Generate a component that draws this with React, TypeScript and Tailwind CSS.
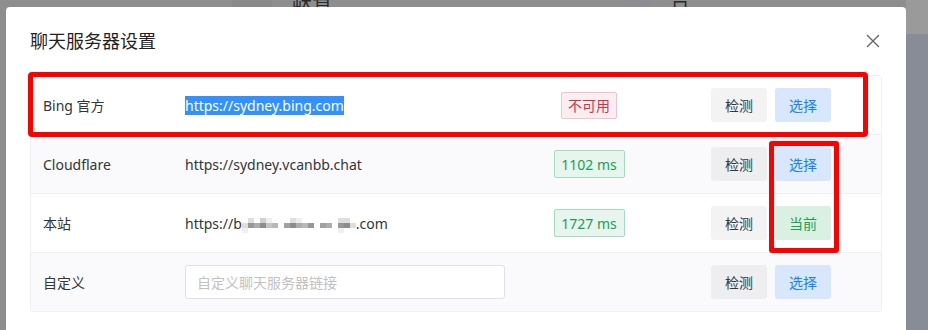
import React from "react";

const font = { fontFamily: '"Noto Sans", "Noto Sans CJK SC", sans-serif' };

function Row({
  name,
  url,
  status,
  action,
  bg,
  first,
}: {
  name: string;
  url: React.ReactNode;
  status: React.ReactNode;
  action: "select" | "current";
  bg: string;
  first?: boolean;
}) {
  return (
    <div
      className={`flex items-center ${first ? "h-[58px]" : "h-[59px] border-t border-[#efeff5]"} ${bg}`}
    >
      <div className="w-[154px] pl-[12px] text-[14px] text-[#333639]">{name}</div>
      <div className="w-[336px] h-[19px] flex items-center text-[14px] leading-[19px] text-[#333639]">{url}</div>
      <div className="w-[136px] flex justify-center">{status}</div>
      <div className="w-[54px]" />
      <div className="flex gap-[8px]">
        <button className="w-[56px] h-[34px] rounded-[3px] bg-[#2e3338]/[0.06] text-[14px] text-[#333639]">
          检测
        </button>
        {action === "select" ? (
          <button className="w-[56px] h-[34px] rounded-[3px] bg-[#d8e7fb] text-[14px] text-[#2080f0]">
            选择
          </button>
        ) : (
          <button className="w-[56px] h-[34px] rounded-[3px] bg-[#daf0e3] text-[14px] text-[#18a058]">
            当前
          </button>
        )}
      </div>
    </div>
  );
}

function OkTag({ text }: { text: string }) {
  return (
    <span className="inline-flex items-center justify-center w-[71px] h-[28px] rounded-[2px] border border-[#a6dcbe] bg-[#e8f5ee] text-[14px] text-[#18a058]">
      {text}
    </span>
  );
}

const mosaic = [
  "0203100021000000220",
  "2869450796580760892",
  "1000000000000000100",
];
const shades = ["#ffffff", "#efefef", "#dedede", "#cfcfcf", "#c4c4c4", "#b8b8b8", "#adadad", "#a2a2a2", "#979797", "#8c8c8c"];

function Pixelated() {
  return (
    <span className="flex flex-col mt-[5px]">
      {mosaic.map((row, r) => (
        <span key={r} className="flex">
          {row.split("").map((c, i) => (
            <span
              key={i}
              className="block w-[6px] h-[5px]"
              style={{ background: shades[Number(c)] }}
            />
          ))}
        </span>
      ))}
    </span>
  );
}

export default function App() {
  return (
    <div className="relative w-[928px] h-[330px] overflow-hidden bg-[#8e8e8e]" style={font}>
      {/* background behind overlay */}
      <div className="absolute inset-0">
        <div className="absolute left-[232px] top-0 w-[40px] h-[8px] bg-[#898989]" />
        <div className="absolute left-[624px] top-0 w-[26px] h-[8px] bg-[#8c8d92]" />
        <div className="absolute left-[906px] top-0 w-[22px] h-[34px] bg-[#9a9a9a]" />
        <div className="absolute left-[906px] top-[34px] w-[22px] h-[296px] bg-[#878c96]" />
        <div className="absolute left-[292px] top-[-14px] text-[20px] text-[#2a2a2a]">缺省</div>
        <div className="absolute left-[670px] top-[-14px] text-[20px] text-[#2a2a2a]">合</div>
      </div>

      <div className="relative pl-[6px] pt-[7px]">
        <div className="w-[900px] h-[340px] bg-white rounded-[4px] px-[24px]">
          <div className="flex items-center justify-between h-[68px]">
            <div className="text-[18px] text-[#1f2225]">聊天服务器设置</div>
            <svg width="16" height="16" viewBox="0 0 16 16" className="mr-[1px]">
              <path d="M2.5 2.5 L13.5 13.5 M13.5 2.5 L2.5 13.5" stroke="#666" strokeWidth="1.4" strokeLinecap="round" />
            </svg>
          </div>
          <div className="border border-[#efeff5] rounded-[3px] overflow-hidden">
            <Row
              first
              bg="bg-white"
              name="Bing 官方"
              url={
                <span className="bg-[#3390ff] text-white leading-[19px] inline-block">
                  https://sydney.bing.com
                </span>
              }
              status={
                <span className="inline-flex items-center justify-center w-[56px] h-[27px] rounded-[2px] border border-[#f3c1cb] bg-[#fcedf0] text-[14px] text-[#d03050]">
                  不可用
                </span>
              }
              action="select"
            />
            <Row
              bg="bg-[#fafafc]"
              name="Cloudflare"
              url="https://sydney.vcanbb.chat"
              status={<OkTag text="1102 ms" />}
              action="select"
            />
            <Row
              bg="bg-white"
              name="本站"
              url={
                <>
                  <span>https://b</span>
                  <Pixelated />
                  <span>.com</span>
                </>
              }
              status={<OkTag text="1727 ms" />}
              action="current"
            />
            <div className="flex items-center h-[59px] border-t border-[#efeff5] bg-[#fafafc]">
              <div className="w-[154px] pl-[12px] text-[14px] text-[#333639]">自定义</div>
              <div className="w-[336px]">
                <div className="w-[320px] h-[34px] rounded-[3px] border border-[#e0e0e6] bg-white flex items-center px-[11px] text-[14px] text-[#c2c2c2]">
                  自定义聊天服务器链接
                </div>
              </div>
              <div className="w-[136px]" />
              <div className="w-[54px]" />
              <div className="flex gap-[8px]">
                <button className="w-[56px] h-[34px] rounded-[3px] bg-[#2e3338]/[0.06] text-[14px] text-[#333639]">
                  检测
                </button>
                <button className="w-[56px] h-[34px] rounded-[3px] bg-[#d8e7fb] text-[14px] text-[#2080f0]">
                  选择
                </button>
              </div>
            </div>
          </div>
        </div>
      </div>

      {/* red annotation boxes */}
      <div className="absolute left-[28px] top-[72px] w-[840px] h-[65px] border-[5px] border-[#ff0000] rounded-[4px] pointer-events-none" />
      <div className="absolute left-[769px] top-[141px] w-[70px] h-[112px] border-[5px] border-[#ff0000] rounded-[3px] pointer-events-none" />
    </div>
  );
}
